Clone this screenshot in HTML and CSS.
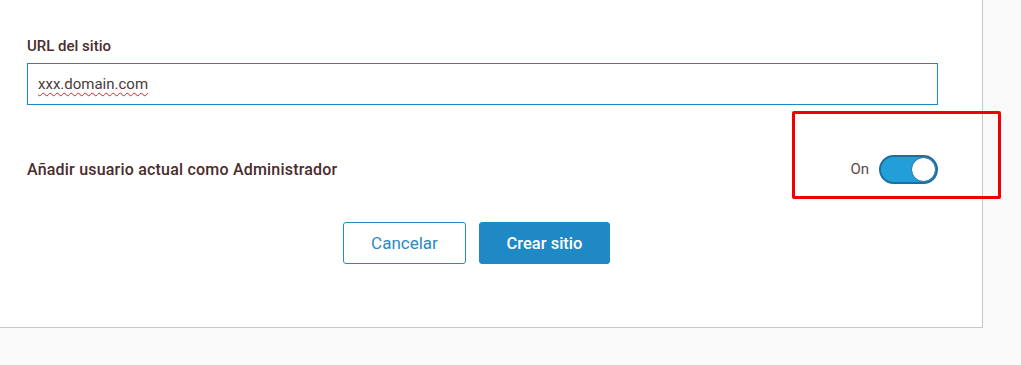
FILE: index.html
```html
<!DOCTYPE html>
<html lang="es">
<head>
<meta charset="utf-8">
<link rel="stylesheet" href="styles.css">
</head>
<body>
<div class="panel">
  <div class="field">
    <label class="label">URL del sitio</label>
    <div class="input"><span class="value">xxx.domain.com</span></div>
  </div>
  <div class="row">
    <span class="row-label">Añadir usuario actual como Administrador</span>
    <div class="switch-wrap">
      <span class="state">On</span>
      <span class="switch"><span class="knob"></span></span>
    </div>
  </div>
  <div class="actions">
    <button class="btn btn-outline">Cancelar</button>
    <button class="btn btn-primary">Crear sitio</button>
  </div>
</div>
<div class="highlight"></div>
</body>
</html>
```
FILE: styles.css
```css
html, body {
  margin: 0;
  padding: 0;
}
body {
  background: #f9f9f9;
  font-family: Roboto, "Liberation Sans", sans-serif;
  color: #4a2c2c;
  width: 1021px;
  height: 365px;
  overflow: hidden;
  position: relative;
}
.panel {
  box-sizing: border-box;
  width: 983px;
  height: 328px;
  background: #fff;
  border-right: 1px solid #c6c6c6;
  border-bottom: 1px solid #c6c6c6;
  padding: 37px 44px 0 27px;
}
.field {
  display: flex;
  flex-direction: column;
}
.label {
  font-size: 15px;
  font-weight: 500;
  line-height: 18px;
  margin-bottom: 8px;
}
.input {
  box-sizing: border-box;
  height: 42px;
  width: 911px;
  border: 1px solid #1e88c4;
  padding: 0 10px;
  display: flex;
  align-items: center;
  font-size: 15px;
}
.value {
  text-decoration: underline wavy #e02020;
  text-decoration-thickness: 1px;
  text-underline-offset: 3px;
  color: #4a3a3a;
}
.row {
  display: flex;
  align-items: center;
  justify-content: space-between;
  width: 911px;
  margin-top: 49px;
  height: 30px;
}
.row-label {
  font-size: 16px;
  font-weight: 500;
  letter-spacing: 0.2px;
}
.switch-wrap {
  display: flex;
  align-items: center;
  gap: 10px;
}
.state {
  font-size: 15px;
  color: #5a4a4a;
}
.switch {
  box-sizing: border-box;
  width: 59px;
  height: 29px;
  border-radius: 15px;
  background: #229fd9;
  border: 2px solid #1c6fa0;
  display: flex;
  align-items: center;
  justify-content: flex-end;
}
.knob {
  box-sizing: border-box;
  width: 25px;
  height: 25px;
  border-radius: 50%;
  background: #fff;
  border: 1px solid #1c6fa0;
}
.actions {
  display: flex;
  justify-content: center;
  gap: 13px;
  margin-top: 38px;
  padding-right: 12px;
}
.btn {
  box-sizing: border-box;
  height: 42px;
  border-radius: 3px;
  font-family: Roboto, "Liberation Sans", sans-serif;
  cursor: pointer;
}
.btn-outline {
  width: 123px;
  background: #fff;
  border: 1px solid #2a89c3;
  color: #2a89c3;
  font-size: 17px;
}
.btn-primary {
  width: 131px;
  background: #1f89c5;
  border: 1px solid #1f89c5;
  color: #fff;
  font-weight: 500;
  font-size: 16.5px;
}
.highlight {
  position: absolute;
  left: 792px;
  top: 111px;
  width: 209px;
  height: 88px;
  box-sizing: border-box;
  border: 3px solid #f20000;
  border-radius: 2px;
}
```
